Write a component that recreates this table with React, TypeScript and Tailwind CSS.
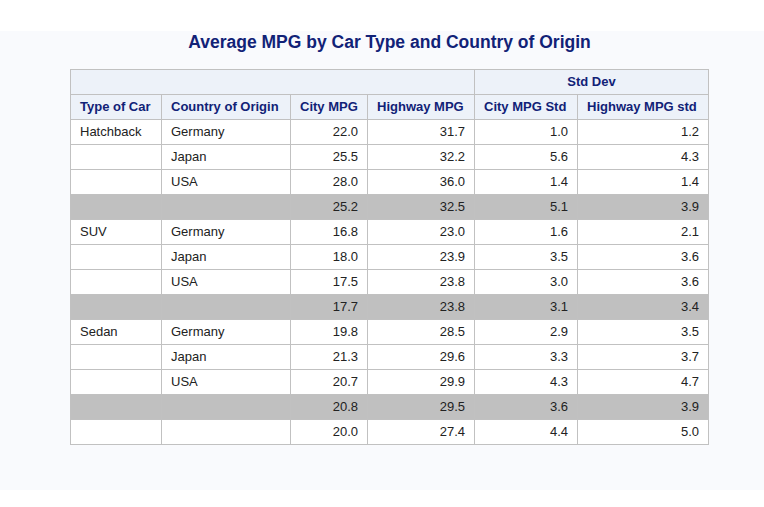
const ROWS: [string, string, string, string, string, string, boolean][] = [
  ['Hatchback', 'Germany', '22.0', '31.7', '1.0', '1.2', false],
  ['', 'Japan', '25.5', '32.2', '5.6', '4.3', false],
  ['', 'USA', '28.0', '36.0', '1.4', '1.4', false],
  ['', '', '25.2', '32.5', '5.1', '3.9', true],
  ['SUV', 'Germany', '16.8', '23.0', '1.6', '2.1', false],
  ['', 'Japan', '18.0', '23.9', '3.5', '3.6', false],
  ['', 'USA', '17.5', '23.8', '3.0', '3.6', false],
  ['', '', '17.7', '23.8', '3.1', '3.4', true],
  ['Sedan', 'Germany', '19.8', '28.5', '2.9', '3.5', false],
  ['', 'Japan', '21.3', '29.6', '3.3', '3.7', false],
  ['', 'USA', '20.7', '29.9', '4.3', '4.7', false],
  ['', '', '20.8', '29.5', '3.6', '3.9', true],
  ['', '', '20.0', '27.4', '4.4', '5.0', false],
]

const HEADERS = ['Type of Car', 'Country of Origin', 'City MPG', 'Highway MPG', 'City MPG Std', 'Highway MPG std']

const cell = 'h-[25px] border border-[#c1c1c1] px-[9px] pt-0 pb-[2px] whitespace-nowrap'
const head = `${cell} bg-[#edf2f9] text-[#112277] font-bold`

export default function App() {
  return (
    <div className="h-[507px] bg-white pt-[31px] font-['Liberation_Sans',Arial,sans-serif]">
      <div className="h-[459px] bg-[#f9fafd] flex flex-col items-center pl-[15px]">
        <h1 className="pt-[1px] text-[17.5px] leading-[20px] font-bold text-[#112277]">
          Average MPG by Car Type and Country of Origin
        </h1>
        <table className="mt-[17px] w-[638px] table-fixed border-collapse text-[13px] leading-[15px]">
          <colgroup>
            <col className="w-[91px]" />
            <col className="w-[129px]" />
            <col className="w-[77px]" />
            <col className="w-[107px]" />
            <col className="w-[103px]" />
            <col className="w-[131px]" />
          </colgroup>
          <thead>
            <tr>
              <th colSpan={4} className={head}></th>
              <th colSpan={2} className={`${head} text-center`}>Std Dev</th>
            </tr>
            <tr>
              {HEADERS.map((h) => (
                <th key={h} className={`${head} text-left`}>{h}</th>
              ))}
            </tr>
          </thead>
          <tbody>
            {ROWS.map((r, i) => {
              const bg = r[6] ? 'bg-[#c0c0c0] border-[#c0c0c0]' : 'bg-white'
              return (
                <tr key={i} className="text-[#222]">
                  <td className={`${cell} ${bg} text-left`}>{r[0]}</td>
                  <td className={`${cell} ${bg} text-left`}>{r[1]}</td>
                  <td className={`${cell} ${bg} text-right`}>{r[2]}</td>
                  <td className={`${cell} ${bg} text-right`}>{r[3]}</td>
                  <td className={`${cell} ${bg} text-right`}>{r[4]}</td>
                  <td className={`${cell} ${bg} text-right`}>{r[5]}</td>
                </tr>
              )
            })}
          </tbody>
        </table>
      </div>
    </div>
  )
}
